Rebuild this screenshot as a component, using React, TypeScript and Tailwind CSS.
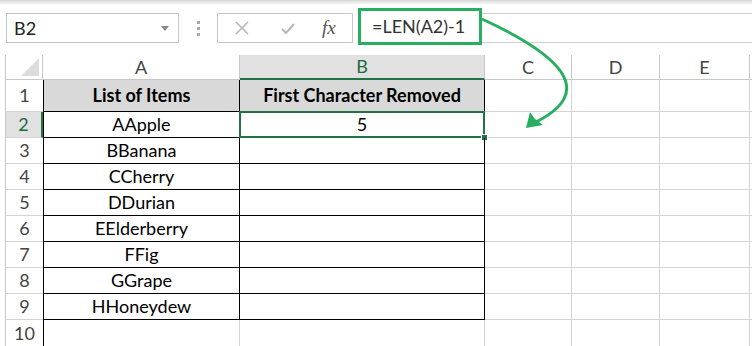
import React from "react";

const ROWS = [
  "List of Items",
  "AApple",
  "BBanana",
  "CCherry",
  "DDurian",
  "EElderberry",
  "FFig",
  "GGrape",
  "HHoneydew",
];

function ColHeaders() {
  return (
    <div className="flex h-[25px]">
      {/* select-all corner */}
      <div className="relative h-[25px] w-[38px] border-l border-b border-r border-[#c8c8c8]">
        <svg className="absolute bottom-[3px] right-[3px]" width="18" height="18">
          <polygon points="18,0 18,18 0,18" fill="#dcdcdc" />
        </svg>
      </div>
      <div className="flex h-[25px] w-[197px] items-center justify-center border-r border-b border-[#c8c8c8] text-[18px] text-[#444]">
        A
      </div>
      <div className="flex h-[25px] w-[245px] items-center justify-center border-r border-b-2 border-r-[#c8c8c8] border-b-[#217346] bg-[#e1e1e1] text-[18px] text-[#1d6b3f]">
        B
      </div>
      <div className="flex h-[25px] w-[87px] items-center justify-center border-r border-b border-[#c8c8c8] text-[18px] text-[#444]">
        C
      </div>
      <div className="flex h-[25px] w-[88px] items-center justify-center border-r border-b border-[#c8c8c8] text-[18px] text-[#444]">
        D
      </div>
      <div className="flex h-[25px] w-[90px] items-center justify-center border-r border-b border-[#c8c8c8] text-[18px] text-[#444]">
        E
      </div>
      <div className="h-[25px] flex-1 border-b border-[#c8c8c8]" />
    </div>
  );
}

function DataRow({ n, item }: { n: number; item: string }) {
  const head = n === 1;
  const sel = n === 2;
  return (
    <div className={head ? "flex h-[32px]" : "flex h-[26px]"}>
      <div
        className={
          sel
            ? "flex w-[38px] items-center justify-center border-l border-b border-r-2 border-l-[#c8c8c8] border-b-[#d4d4d4] border-r-[#217346] bg-[#e1e1e1] text-[18px] text-[#1d6b3f]"
            : "flex w-[38px] items-center justify-center border-l border-b border-l-[#c8c8c8] border-b-[#d4d4d4] text-[18px] text-[#444]"
        }
      >
        {n}
      </div>
      <div
        className={
          head
            ? "flex w-[197px] items-center justify-center border border-t-0 border-black bg-[#d9d9d9] text-[18px] font-bold text-black"
            : "flex w-[197px] items-center justify-center border border-t-0 border-black text-[18px] text-black"
        }
      >
        {item}
      </div>
      <div
        className={
          head
            ? "flex w-[245px] items-center justify-center border-r border-b border-black bg-[#d9d9d9] text-[18px] font-bold text-black"
            : "relative flex w-[245px] items-center justify-center border-r border-b border-black text-[18px] text-black"
        }
      >
        {head ? "First Character Removed" : sel ? "5" : ""}
        {sel && (
          <>
            <div className="absolute -left-px -top-px bottom-[-1px] right-[-1px] border-2 border-[#217346]" />
            <div className="absolute -bottom-[4px] -right-[4px] h-[7px] w-[7px] border border-white bg-[#217346]" />
          </>
        )}
      </div>
      <div className="w-[87px] border-r border-b border-[#d4d4d4]" />
      <div className="w-[88px] border-r border-b border-[#d4d4d4]" />
      <div className="w-[90px] border-r border-b border-[#d4d4d4]" />
      <div className="flex-1 border-b border-[#d4d4d4]" />
    </div>
  );
}

function LastRow() {
  return (
    <div className="flex h-[26px]">
      <div className="flex w-[38px] items-center justify-center border-l border-l-[#c8c8c8] text-[18px] text-[#444]">
        10
      </div>
      <div className="w-[197px] border-l border-r border-l-black border-r-[#d4d4d4]" />
      <div className="w-[245px] border-r border-[#d4d4d4]" />
      <div className="w-[87px] border-r border-[#d4d4d4]" />
      <div className="w-[88px] border-r border-[#d4d4d4]" />
      <div className="w-[90px] border-r border-[#d4d4d4]" />
    </div>
  );
}

export default function App() {
  return (
    <div className="relative h-[346px] w-[752px] overflow-hidden bg-white font-['Lato',sans-serif]">
      {/* ribbon edge */}
      <div className="h-[5px] bg-gradient-to-b from-[#d6d6d6] to-white" />

      {/* name box + formula bar */}
      <div className="mt-[8px] flex h-[30px] items-center">
        <div className="ml-[6px] flex h-[30px] w-[173px] items-center justify-between border border-[#c6c6c6] px-[7px] text-[18px] text-[#222]">
          <span>B2</span>
          <svg width="8" height="5" className="mr-[2px]">
            <polygon points="0,0 8,0 4,5" fill="#8a8a8a" />
          </svg>
        </div>
        <div className="flex w-[38px] flex-col items-center gap-[3px]">
          <div className="h-[3px] w-[3px] bg-[#a8a8a8]" />
          <div className="h-[3px] w-[3px] bg-[#a8a8a8]" />
          <div className="h-[3px] w-[3px] bg-[#a8a8a8]" />
        </div>
        <div className="flex h-[30px] w-[136px] items-center border border-[#c6c6c6]">
          <svg width="16" height="16" className="ml-[16px]">
            <path d="M2 2 L14 14 M14 2 L2 14" stroke="#b8b8b8" strokeWidth="1.6" fill="none" />
          </svg>
          <svg width="16" height="16" className="ml-[30px]">
            <path d="M2 9 L6 13 L14 4" stroke="#b8b8b8" strokeWidth="2" fill="none" />
          </svg>
          <span className="ml-[26px] font-['Liberation_Serif',serif] text-[19px] italic text-[#555]">fx</span>
        </div>
        <div className="ml-[5px] h-[30px] flex-1 border-y border-[#d0d0d0]" />
      </div>

      {/* grid */}
      <div className="ml-[5px] mt-[12px]">
        <ColHeaders />
        {ROWS.map((item, i) => (
          <DataRow key={i} n={i + 1} item={item} />
        ))}
        <LastRow />
      </div>

      {/* formula annotation */}
      <div className="absolute left-[358px] top-[8px] flex h-[37px] w-[124px] items-center border-[3px] border-[#27ae60] bg-white pl-[11px] text-[18px] text-[#333]">
        =LEN(A2)-1
      </div>
      <svg className="pointer-events-none absolute left-0 top-0" width="752" height="346">
        <path d="M482 19 C 560 55, 600 92, 532 124" stroke="#27ae60" strokeWidth="3" fill="none" />
        <polygon points="526,128 530,112 535,119 543,125" fill="#27ae60" />
      </svg>
    </div>
  );
}
